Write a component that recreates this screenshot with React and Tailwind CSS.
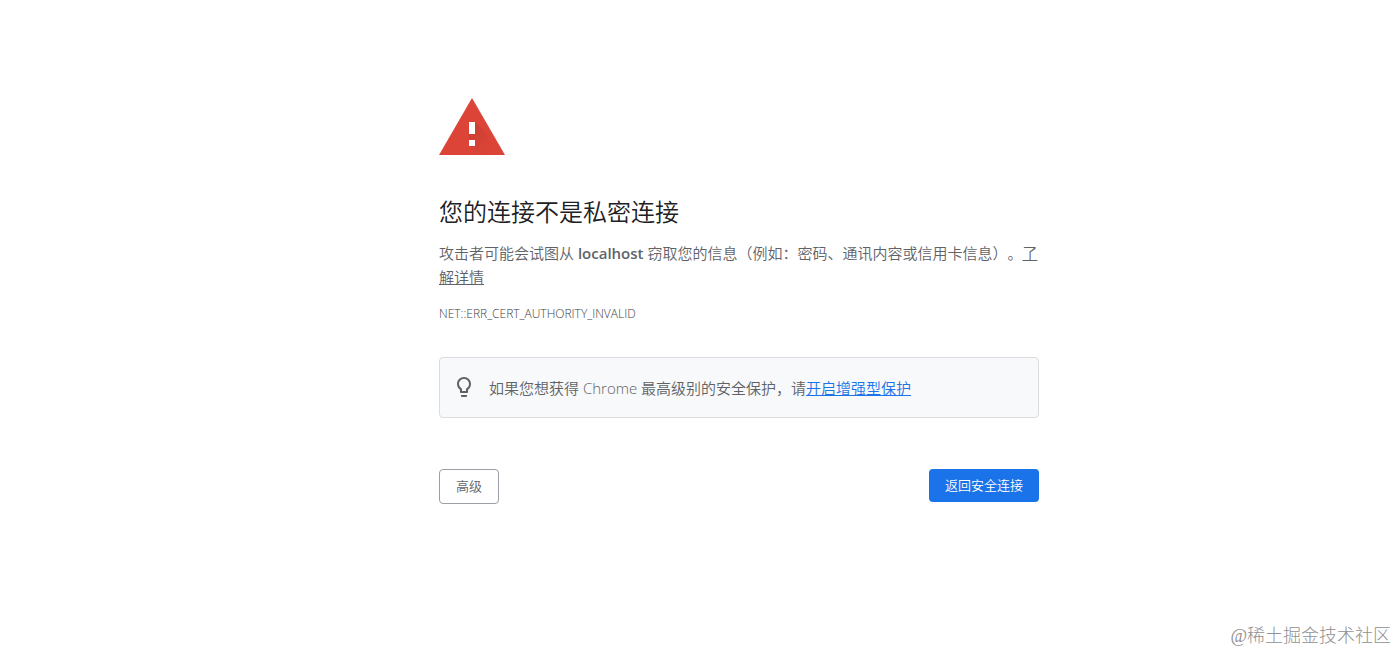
const WarningIcon = () => (
    <svg width="66" height="57" viewBox="0 0 66 57" aria-hidden="true">
        <defs>
            <linearGradient id="shade" x1="0" y1="0" x2="1" y2="1">
                <stop offset="0" stopColor="#b93a2e" stopOpacity="0.75" />
                <stop offset="1" stopColor="#db4437" stopOpacity="0" />
            </linearGradient>
        </defs>
        <path d="M33 0 66 57H0z" fill="#db4437" />
        <path d="M36 24 48 36 58 57H40L30 48H36V42H30V36H36z" fill="url(#shade)" />
        <path d="M30 24h6v12h-6zM30 42h6v6h-6z" fill="#fff" />
    </svg>
);

const BulbIcon = () => (
    <svg width="24" height="24" viewBox="0 0 24 24" fill="#5f6368" className="shrink-0" aria-hidden="true">
        <path d="M9 20c0 .55.45 1 1 1h4c.55 0 1-.45 1-1v-1H9v1zm3-19C8.14 1 5 4.14 5 8c0 2.38 1.19 4.47 3 5.74V16c0 .55.45 1 1 1h6c.55 0 1-.45 1-1v-2.26c1.81-1.27 3-3.36 3-5.74 0-3.86-3.14-7-7-7zm2.85 11.1-.85.6V15h-4v-2.3l-.85-.6A4.997 4.997 0 0 1 7 8c0-2.76 2.24-5 5-5s5 2.24 5 5c0 1.63-.8 3.16-2.15 4.1z" />
    </svg>
);

const App = () => {
    return (
        <div className="flex min-h-screen flex-col bg-white font-['Open_Sans','Noto_Sans_CJK_SC',sans-serif] font-[350] text-[#5f6368] [text-spacing-trim:space-all]" lang="zh-CN">
            <main className="mx-auto w-full max-w-[681px] grow pt-[98px] pl-[81px]">
                <WarningIcon />

                <h1 className="mt-[41px] text-2xl leading-8 font-[350] text-[#202124]">您的连接不是私密连接</h1>
                <p className="mt-[13px] text-[15px] leading-6">
                    攻击者可能会试图从 <strong className="font-semibold">localhost</strong> 窃取您的信息（例如：密码、通讯内容或信用卡信息）。<a href="#details" className="underline">了解详情</a>
                </p>
                <p className="mt-[13px] text-xs leading-6 font-light text-[#3c4043]">NET::ERR_CERT_AUTHORITY_INVALID</p>

                <div className="mt-[31px] flex items-center gap-[13px] rounded border border-[#dadce0] bg-[#f8f9fa] px-3 pt-[18px] pb-[17px]">
                    <BulbIcon />
                    <p className="text-[15px] leading-6">
                        如果您想获得 Chrome 最高级别的安全保护，请<a href="#enhanced" className="text-[#1a73e8] underline">开启增强型保护</a>
                    </p>
                </div>

                <div className="mt-[51px] flex items-start justify-between">
                    <button type="button" className="rounded border border-[#9aa0a6] px-4 py-2 text-[13px] leading-[17px]">
                        高级
                    </button>
                    <button type="button" className="rounded bg-[#1a73e8] px-4 py-2 text-[13px] leading-[17px] text-white">
                        返回安全连接
                    </button>
                </div>
            </main>

            <footer className="px-[6px] pb-1 text-right font-['Liberation_Serif','Noto_Sans_CJK_SC',serif] text-lg leading-6 font-light text-[#909090]">
                @稀土掘金技术社区
            </footer>
        </div>
    );
};

export default App;
